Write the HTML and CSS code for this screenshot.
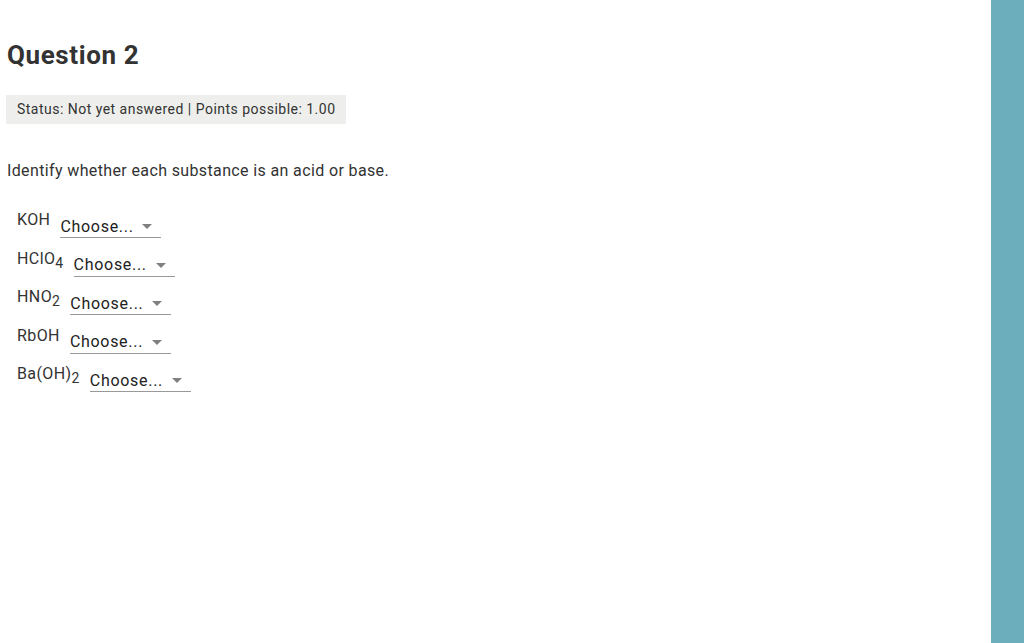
FILE: index.html
```html
<!DOCTYPE html>
<html>
<head>
<meta charset="utf-8">
<link rel="stylesheet" href="styles.css">
</head>
<body>
<div class="page">
  <main class="content">
    <h2 class="qtitle">Question 2</h2>
    <div class="status">Status: Not yet answered | Points possible: 1.00</div>
    <p class="prompt">Identify whether each substance is an acid or base.</p>
    <div class="rows">
      <div class="row"><span class="label">KOH</span><div class="select"><span class="choose">Choose...</span><span class="caret"></span></div></div>
      <div class="row"><span class="label">HClO<sub>4</sub></span><div class="select"><span class="choose">Choose...</span><span class="caret"></span></div></div>
      <div class="row"><span class="label">HNO<sub>2</sub></span><div class="select"><span class="choose">Choose...</span><span class="caret"></span></div></div>
      <div class="row"><span class="label">RbOH</span><div class="select"><span class="choose">Choose...</span><span class="caret"></span></div></div>
      <div class="row"><span class="label">Ba(OH)<sub>2</sub></span><div class="select"><span class="choose">Choose...</span><span class="caret"></span></div></div>
    </div>
  </main>
  <aside class="sidebar"></aside>
</div>
</body>
</html>
```
FILE: styles.css
```css
html, body {
  margin: 0;
  padding: 0;
  height: 100%;
  background: #fff;
  font-family: Roboto, "Liberation Sans", sans-serif;
  color: #333;
}
.page {
  display: flex;
  height: 643px;
}
.content {
  flex: 1;
  padding: 40px 0 0 6px;
}
.sidebar {
  width: 33px;
  background: #6daebd;
}
.qtitle {
  margin: 0 0 0 1px;
  font-size: 26px;
  font-weight: 700;
  line-height: 30px;
  letter-spacing: 0.6px;
  color: #333;
}
.status {
  display: inline-block;
  margin-top: 25px;
  background: #eeefec;
  font-size: 14px;
  line-height: 29px;
  letter-spacing: 0.48px;
  padding: 0 11px;
  color: #333;
}
.prompt {
  margin: 37px 0 0 1px;
  font-size: 16px;
  line-height: 20px;
  letter-spacing: 0.37px;
  color: #333;
}
.rows {
  margin-top: 29px;
  padding-left: 11px;
}
.row {
  display: flex;
  align-items: flex-start;
  height: 38.5px;
  gap: 10px;
}
.label {
  font-size: 16px;
  line-height: 20px;
  letter-spacing: 0.4px;
  color: #333;
}
.label sub {
  font-size: 14px;
  vertical-align: -4px;
  line-height: 0;
}
.select {
  margin-top: 6px;
  width: 101px;
  height: 21px;
  border-bottom: 1px solid #999;
  display: flex;
  align-items: center;
  font-size: 16px;
  line-height: 20px;
  letter-spacing: 0.7px;
  color: #222;
}
.choose {
  flex: 1;
}
.caret {
  width: 0;
  height: 0;
  border-left: 5px solid transparent;
  border-right: 5px solid transparent;
  border-top: 5px solid #808080;
  margin-right: 9px;
}
```
